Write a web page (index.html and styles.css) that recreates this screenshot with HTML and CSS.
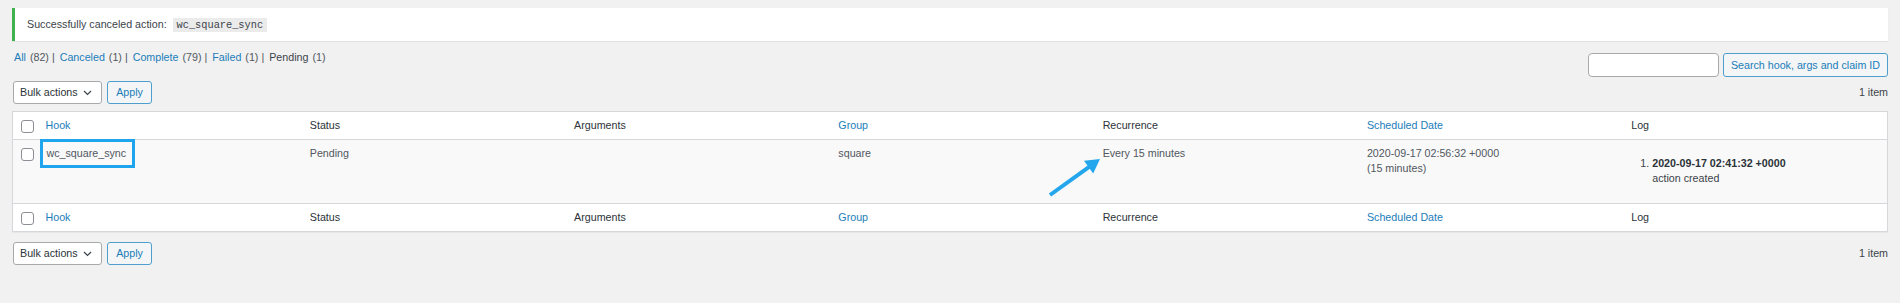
FILE: index.html
```html
<!DOCTYPE html>
<html lang="en">
<head>
<meta charset="utf-8">
<title>Scheduled Actions</title>
<link rel="stylesheet" href="styles.css">
</head>
<body>
<div class="wrap">
  <div class="notice"><p>Successfully canceled action: <code>wc_square_sync</code></p></div>

  <div class="top-row">
    <ul class="subsubsub">
      <li><a href="#">All</a><span class="count">(82)</span><span class="sep">|</span></li>
      <li><a href="#">Canceled</a><span class="count">(1)</span><span class="sep">|</span></li>
      <li><a href="#">Complete</a><span class="count">(79)</span><span class="sep">|</span></li>
      <li><a href="#">Failed</a><span class="count">(1)</span><span class="sep">|</span></li>
      <li class="current">Pending<span class="count">(1)</span></li>
    </ul>
    <div class="search-box">
      <input type="search" class="search-input" aria-label="Search">
      <button class="button">Search hook, args and claim ID</button>
    </div>
  </div>

  <div class="tablenav">
    <div class="actions">
      <div class="select">Bulk actions
        <svg class="chev" width="9" height="6" viewBox="0 0 9 6"><path d="M1 1l3.5 3.5L8 1" fill="none" stroke="#3c434a" stroke-width="1.2"/></svg>
      </div>
      <button class="button">Apply</button>
    </div>
    <div class="num">1 item</div>
  </div>

  <table class="list">
    <colgroup>
      <col class="c-cb"><col><col><col><col><col><col><col>
    </colgroup>
    <thead>
      <tr>
        <th class="cb"><input type="checkbox" class="chk" aria-label="Select all"></th>
        <th><a href="#">Hook</a></th>
        <th>Status</th>
        <th>Arguments</th>
        <th><a href="#">Group</a></th>
        <th>Recurrence</th>
        <th><a href="#">Scheduled Date</a></th>
        <th>Log</th>
      </tr>
    </thead>
    <tbody>
      <tr>
        <td class="cb"><input type="checkbox" class="chk" aria-label="Select"></td>
        <td><span class="hook">wc_square_sync</span></td>
        <td>Pending</td>
        <td></td>
        <td>square</td>
        <td>Every 15 minutes</td>
        <td>2020-09-17 02:56:32 +0000<br>(15 minutes)</td>
        <td>
          <ol class="log">
            <li><strong>2020-09-17 02:41:32 +0000</strong><br>action created</li>
          </ol>
        </td>
      </tr>
    </tbody>
    <tfoot>
      <tr>
        <th class="cb"><input type="checkbox" class="chk" aria-label="Select all"></th>
        <th><a href="#">Hook</a></th>
        <th>Status</th>
        <th>Arguments</th>
        <th><a href="#">Group</a></th>
        <th>Recurrence</th>
        <th><a href="#">Scheduled Date</a></th>
        <th>Log</th>
      </tr>
    </tfoot>
  </table>

  <div class="tablenav bottom">
    <div class="actions">
      <div class="select">Bulk actions
        <svg class="chev" width="9" height="6" viewBox="0 0 9 6"><path d="M1 1l3.5 3.5L8 1" fill="none" stroke="#3c434a" stroke-width="1.2"/></svg>
      </div>
      <button class="button">Apply</button>
    </div>
    <div class="num">1 item</div>
  </div>

  <svg class="arrow" width="64" height="48" viewBox="0 0 64 48">
    <line x1="6" y1="43" x2="45.5" y2="14.6" stroke="#23a6ec" stroke-width="4"/>
    <polygon points="56,7 49.2,21.5 40,8.8" fill="#23a6ec"/>
  </svg>
</div>
</body>
</html>
```

FILE: styles.css
```css
* { box-sizing: border-box; }

html, body {
  margin: 0;
  padding: 0;
  background: #f1f1f1;
}

body {
  font-family: "Liberation Sans", Arial, sans-serif;
  font-size: 10.7px;
  line-height: 15px;
  color: #3c434a;
}

a { color: #1a7dba; text-decoration: none; }

.wrap {
  position: relative;
  padding: 8px 12px 0 12px;
  height: 303px;
}

/* notice */
.notice {
  background: #fff;
  border-left: 3px solid #3fb24f;
  box-shadow: 0 1px 1px rgba(0,0,0,.06);
  padding: 0 12px;
}
.notice p {
  margin: 0;
  padding: 8.5px 0;
}
.notice code {
  font-family: "Liberation Mono", "DejaVu Sans Mono", monospace;
  font-size: 10.3px;
  background: #ebebeb;
  padding: 1px 4px;
  margin-left: 3px;
}

/* top row */
.top-row {
  display: flex;
  justify-content: space-between;
  align-items: flex-start;
  margin-top: 8px;
  height: 28px;
}
.subsubsub {
  list-style: none;
  margin: 1px 0 0 2px;
  padding: 0;
  display: flex;
  color: #50575e;
}
.subsubsub li { display: flex; white-space: nowrap; }
.subsubsub .count { color: #50575e; margin-left: 4px; }
.subsubsub .sep { color: #50575e; margin: 0 5px 0 3px; }
.subsubsub .current { color: #3c434a; }

.search-box {
  display: flex;
  gap: 4px;
  margin-top: 4px;
}
.search-input {
  width: 131px;
  height: 24px;
  border: 1px solid #a7aaad;
  border-radius: 4px;
  background: #fff;
  margin: 0;
  padding: 0 6px;
}
.button {
  font: inherit;
  height: 24px;
  margin: 0;
  padding: 0 4px;
  border: 1px solid #4f9fce;
  border-radius: 3px;
  background: #f3f5f6;
  color: #1a7dba;
  line-height: 22px;
  white-space: nowrap;
  text-align: center;
}
.search-box .button { width: 165px; }

/* tablenav */
.tablenav {
  display: flex;
  justify-content: space-between;
  align-items: center;
  height: 23px;
  margin-top: 4px;
}
.tablenav.bottom { margin-top: 10px; }
.actions {
  display: flex;
  gap: 5px;
  margin-left: 1px;
}
.select {
  width: 89px;
  height: 23px;
  border: 1px solid #a7aaad;
  border-radius: 3px;
  background: #fff;
  display: flex;
  align-items: center;
  padding-left: 6px;
  color: #2c3338;
  gap: 5px;
}
.chev { margin-top: 1px; }
.actions .button {
  height: 23px;
  width: 45px;
  padding: 0;
  line-height: 21px;
}
.num { color: #3c434a; }

/* table */
.list {
  margin-top: 7px;
  width: 100%;
  border: 1px solid #d5d7da;
  border-collapse: collapse;
  border-spacing: 0;
  table-layout: fixed;
  background: #fff;
  box-shadow: 0 1px 1px rgba(0,0,0,.04);
}
.c-cb { width: 25px; }
.list th, .list td {
  text-align: left;
  font-weight: normal;
  padding: 6px 8px;
  vertical-align: top;
}
.list th { color: #2c3338; }
.list thead th { border-bottom: 1px solid #d5d7da; }
.list tfoot th { border-top: 1px solid #d5d7da; }
.list tbody td {
  background: #f9f9f9;
  color: #50575e;
}
.list .cb { padding: 8px 0 0 8px; }

.chk {
  -webkit-appearance: none;
  appearance: none;
  display: block;
  width: 13px;
  height: 13px;
  margin: 0;
  border: 1px solid #8c8f94;
  border-radius: 3px;
  background: #fff;
}

.hook {
  position: relative;
  display: inline-block;
  margin-left: 1px;
}
.hook::after {
  content: "";
  position: absolute;
  left: -7px;
  right: -9px;
  top: -7px;
  bottom: -7px;
  border: 3px solid #1fa5ee;
}

.log {
  margin: 10px 0 11px 21px;
  padding: 0;
  color: #3c434a;
}
.log strong { color: #2c3338; font-weight: bold; }
.log li { color: #3c434a; }

/* annotation arrow */
.arrow {
  position: absolute;
  left: 1044px;
  top: 152px;
}
```
